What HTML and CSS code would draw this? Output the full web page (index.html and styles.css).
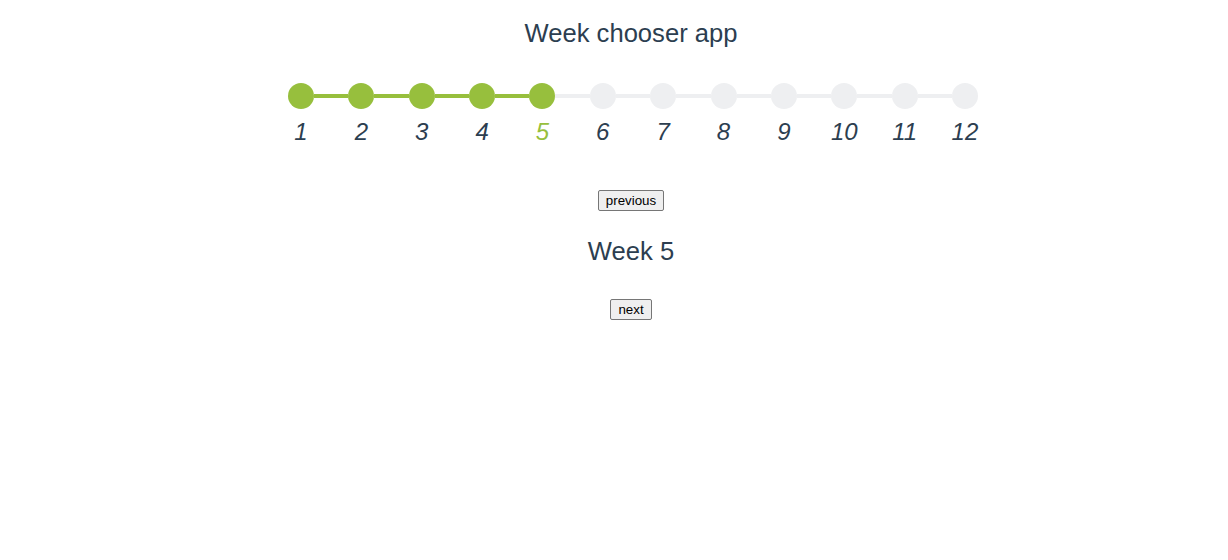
FILE: index.html
```html
<!DOCTYPE html>
<html lang="en">
<head>
<meta charset="utf-8">
<title>Week chooser app</title>
<link rel="stylesheet" href="styles.css">
</head>
<body>
<main class="app">
  <h1 class="title">Week chooser app</h1>
  <div class="steps">
    <div class="step done"><span class="dot"></span><span class="label">1</span></div>
    <span class="link done"></span>
    <div class="step done"><span class="dot"></span><span class="label">2</span></div>
    <span class="link done"></span>
    <div class="step done"><span class="dot"></span><span class="label">3</span></div>
    <span class="link done"></span>
    <div class="step done"><span class="dot"></span><span class="label">4</span></div>
    <span class="link done"></span>
    <div class="step done current"><span class="dot"></span><span class="label">5</span></div>
    <span class="link"></span>
    <div class="step"><span class="dot"></span><span class="label">6</span></div>
    <span class="link"></span>
    <div class="step"><span class="dot"></span><span class="label">7</span></div>
    <span class="link"></span>
    <div class="step"><span class="dot"></span><span class="label">8</span></div>
    <span class="link"></span>
    <div class="step"><span class="dot"></span><span class="label">9</span></div>
    <span class="link"></span>
    <div class="step"><span class="dot"></span><span class="label">10</span></div>
    <span class="link"></span>
    <div class="step"><span class="dot"></span><span class="label">11</span></div>
    <span class="link"></span>
    <div class="step"><span class="dot"></span><span class="label">12</span></div>
  </div>
  <div class="nav">
    <button class="btn" type="button">previous</button>
    <h2 class="week">Week 5</h2>
    <button class="btn" type="button">next</button>
  </div>
</main>
</body>
</html>
```

FILE: styles.css
```css
html, body {
  margin: 0;
  padding: 0;
  background: #ffffff;
}

body {
  font-family: "Liberation Sans", Arial, Helvetica, sans-serif;
  color: #2c3e50;
}

.app {
  padding-left: 34px;
  text-align: center;
}

.title {
  margin: 19px 0 0;
  font-size: 25.6px;
  line-height: 29px;
  font-weight: normal;
}

.steps {
  display: flex;
  width: 690px;
  margin: 35px auto 0;
  padding-left: 4px;
}

.step {
  width: 26px;
  display: flex;
  flex-direction: column;
  align-items: center;
}

.dot {
  width: 26px;
  height: 26px;
  border-radius: 50%;
  background: #eeeff1;
}

.step.done .dot {
  background: #97bf3d;
}

.label {
  margin-top: 9px;
  font-size: 24px;
  line-height: 28px;
  font-style: italic;
  white-space: nowrap;
}

.step.current .label {
  color: #97bf3d;
}

.link {
  flex: 1;
  height: 4px;
  margin-top: 11px;
  background: #eeeff1;
}

.link.done {
  background: #97bf3d;
}

.nav {
  display: flex;
  flex-direction: column;
  align-items: center;
  margin-top: 44px;
}

.btn {
  font-family: "Liberation Sans", Arial, sans-serif;
  font-size: 13.33px;
  line-height: 15px;
  color: #000000;
  background: #efefef;
  border: 1px solid #767676;
  border-radius: 2px;
  padding: 2px 7px 2px;
  height: 21px;
}

.week {
  margin: 25px 0 33px;
  font-size: 25.6px;
  line-height: 30px;
  font-weight: normal;
}
```
